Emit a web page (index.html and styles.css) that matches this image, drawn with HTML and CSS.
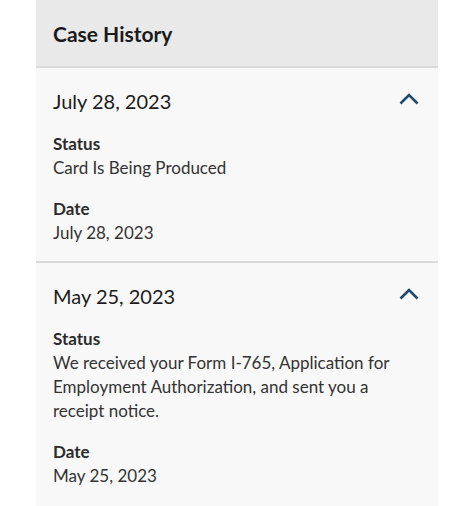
FILE: index.html
```html
<!DOCTYPE html>
<html lang="en">
<head>
    <meta charset="UTF-8">
    <meta name="viewport" content="width=device-width, initial-scale=1.0">
    <title>Case History</title>
    <link rel="stylesheet" href="styles.css">
</head>
<body>
    <div class="panel">
        <div class="panel-header">
            <h1>Case History</h1>
        </div>

        <div class="entry">
            <div class="entry-head">
                <h2>July 28, 2023</h2>
                <svg class="chevron" width="20" height="12" viewBox="0 0 20 12">
                    <path d="M1.5 10.5 L10 2 L18.5 10.5" fill="none" stroke="#1d4a6e" stroke-width="2.6"/>
                </svg>
            </div>
            <div class="field">
                <div class="label">Status</div>
                <div class="value">Card Is Being Produced</div>
            </div>
            <div class="field">
                <div class="label">Date</div>
                <div class="value">July 28, 2023</div>
            </div>
        </div>

        <div class="entry">
            <div class="entry-head">
                <h2>May 25, 2023</h2>
                <svg class="chevron" width="20" height="12" viewBox="0 0 20 12">
                    <path d="M1.5 10.5 L10 2 L18.5 10.5" fill="none" stroke="#1d4a6e" stroke-width="2.6"/>
                </svg>
            </div>
            <div class="field">
                <div class="label">Status</div>
                <div class="value">We received your Form I-765, Application for Employment Authorization, and sent you a receipt notice.</div>
            </div>
            <div class="field">
                <div class="label">Date</div>
                <div class="value">May 25, 2023</div>
            </div>
        </div>
    </div>
</body>
</html>
```

FILE: styles.css
```css
body {
    margin: 0;
    font-family: Lato, "Open Sans", sans-serif;
    background-color: #ffffff;
    color: #1b1b1b;
}

.panel {
    margin-left: 36px;
    width: 402px;
    min-height: 506px;
    background-color: #f8f8f8;
}

.panel-header {
    height: 66px;
    background-color: #e9e9e9;
    border-bottom: 2px solid #dadada;
    padding: 0 17px;
    display: flex;
    align-items: center;
}

.panel-header h1 {
    margin: 0;
    font-size: 21px;
    font-weight: 700;
}

.entry {
    padding: 21px 19px 16px 17px;
    border-bottom: 2px solid #dadada;
}

.entry:last-child {
    border-bottom: none;
}

.entry-head {
    display: flex;
    justify-content: space-between;
    align-items: center;
    margin-bottom: 19px;
}

.entry-head h2 {
    margin: 0;
    font-size: 20px;
    font-weight: 400;
}

.chevron {
    display: block;
    margin-top: -4px;
}

.field {
    margin-bottom: 17px;
}

.field:last-child {
    margin-bottom: 0;
}

.label {
    font-size: 17px;
    font-weight: 700;
    line-height: 24px;
    color: #2b2b2b;
}

.value {
    font-size: 17px;
    line-height: 24px;
    color: #333333;
}
```
